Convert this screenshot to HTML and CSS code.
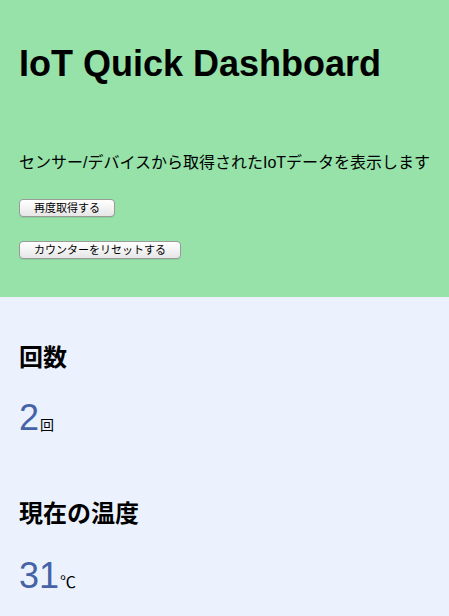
FILE: index.html
```html
<!DOCTYPE html>
<html lang="ja">
<head>
<meta charset="utf-8">
<title>IoT Quick Dashboard</title>
<link rel="stylesheet" href="styles.css">
</head>
<body>
<header class="hero">
  <h1 class="title">IoT Quick Dashboard</h1>
  <p class="lead">センサー/デバイスから取得されたIoTデータを表示します</p>
  <button class="btn btn-first" type="button">再度取得する</button>
  <button class="btn btn-second" type="button">カウンターをリセットする</button>
</header>
<main class="panel">
  <h2 class="label label-first">回数</h2>
  <div class="value"><span class="num">2</span><span class="unit">回</span></div>
  <h2 class="label label-second">現在の温度</h2>
  <div class="value"><span class="num">31</span><span class="unit unit-temp">℃</span></div>
</main>
</body>
</html>
```
FILE: styles.css
```css
html, body {
  margin: 0;
  padding: 0;
}
body {
  background: #f4e9f7;
  font-family: "Liberation Sans", "Noto Sans CJK JP", sans-serif;
  color: #000;
}
.hero {
  background: #96e2a9;
  padding: 43px 19px 38px;
  display: flex;
  flex-direction: column;
  align-items: flex-start;
}
.title {
  margin: 0;
  font-size: 36px;
  line-height: 42px;
  font-weight: bold;
}
.lead {
  margin: 68px 0 0;
  font-size: 16px;
  line-height: 20px;
  white-space: nowrap;
}
.btn {
  font-family: "Liberation Sans", "Noto Sans CJK JP", sans-serif;
  font-size: 11px;
  line-height: 14px;
  height: 18px;
  padding: 0 12px;
  color: #000;
  border: 1px solid #9a9a9a;
  border-radius: 4px;
  background: linear-gradient(#ffffff, #f3f3f3 50%, #e6e6e6);
  box-shadow: 0 1px 0 rgba(0,0,0,0.08);
}
.btn-first {
  margin-top: 26px;
  width: 96px;
}
.btn-second {
  margin-top: 24px;
  width: 162px;
}
.panel {
  background: #ebf2fe;
  padding: 47px 19px 25px;
}
.label {
  margin: 0;
  font-size: 24px;
  line-height: 28px;
  font-weight: bold;
}
.label-second {
  margin-top: 55px;
}
.value {
  margin-top: 26px;
  line-height: 40px;
  display: flex;
  align-items: baseline;
}
.label-second + .value {
  margin-top: 28px;
}
.num {
  font-size: 36px;
  color: #4563a6;
}
.unit {
  font-size: 14px;
  margin-left: 1px;
}
.unit-temp {
  font-size: 16px;
}
```
